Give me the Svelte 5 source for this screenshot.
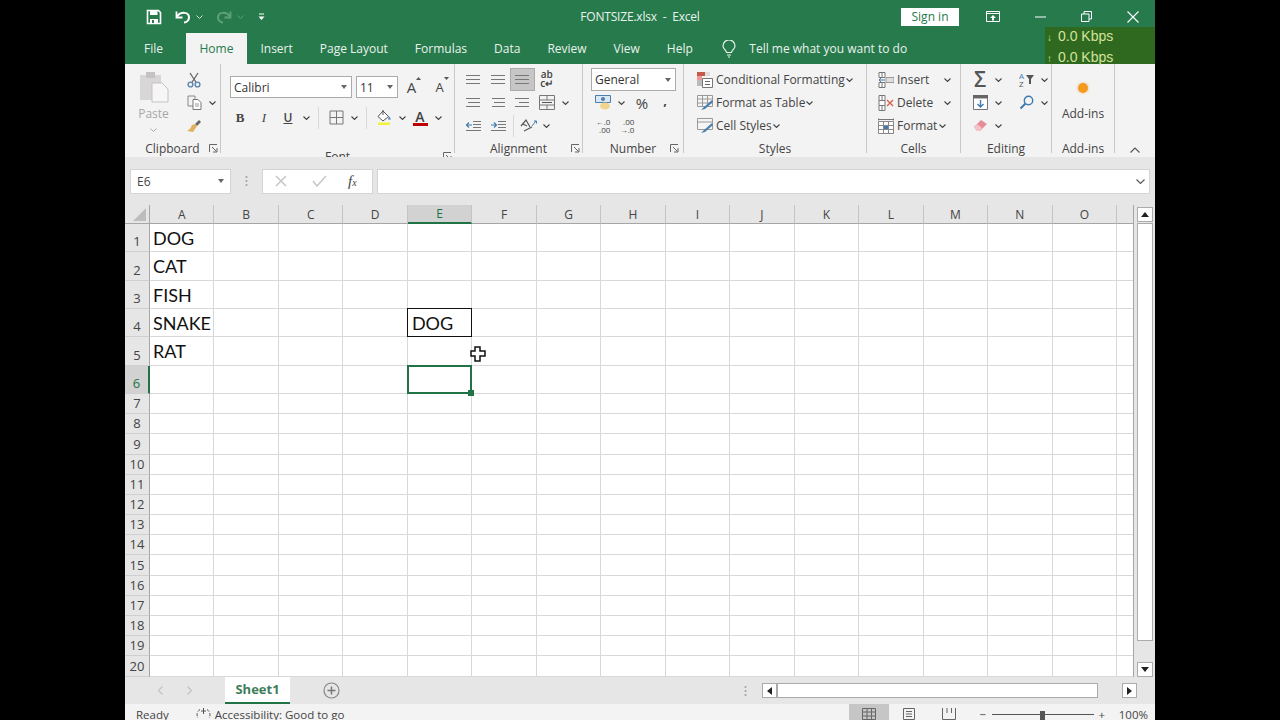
<script>
    const tabs = ["Insert", "Page Layout", "Formulas", "Data", "Review", "View", "Help"];
    const cols = ["A", "B", "C", "D", "E", "F", "G", "H", "I", "J", "K", "L", "M", "N", "O"];
    const rows = Array.from({ length: 20 }, (_, i) => i + 1);
    const cells = { A1: "DOG", A2: "CAT", A3: "FISH", A4: "SNAKE", A5: "RAT", E4: "DOG" };
</script>

{#snippet chev()}
    <span class="chev"><svg width="7" height="4" viewBox="0 0 7 4"><path d="M.5.5l3 3 3-3" fill="none" stroke="#444" stroke-width="1.1" /></svg></span>
{/snippet}

{#snippet launcher()}
    <svg class="launch" width="9" height="9" viewBox="0 0 9 9"><path d="M.5 8V.5H8M3 3l4.5 4.5M4 8h4V4" fill="none" stroke="#666" /></svg>
{/snippet}

{#snippet lines(a, b, c)}
    <svg width="16" height="12" viewBox="0 0 16 12"><path d="M{a} 1.5H15M{b} 5.5H15M{c} 9.5H15" stroke="#777" fill="none" /></svg>
{/snippet}

<div class="excel">
    <header class="titlebar">
        <div class="qat">
            <svg class="q-save" width="16" height="16" viewBox="0 0 16 16"><path d="M1.5 1.5h11l2 2v11h-13z" fill="none" stroke="#fff" stroke-width="1.6" /><path d="M4 2h7.500v4H4zM4 10h8v4.500H4z" fill="#fff" /><path d="M6 11h2v3H6z" fill="#2a7a4d" /></svg>
            <svg class="q-undo" width="16" height="14" viewBox="0 0 16 14"><path d="M2 6.500C6 1 14 2 14 7.500c0 3-2.500 5-5 5" fill="none" stroke="#fff" stroke-width="2" /><path d="M1.500 1.500v6h6" fill="none" stroke="#fff" stroke-width="1.800" /></svg>
            <svg class="q-ch" width="7" height="4" viewBox="0 0 7 4"><path d="M.5.5l3 3 3-3" fill="none" stroke="#cfe3d7" /></svg>
            <svg class="q-redo" width="16" height="14" viewBox="0 0 16 14"><path d="M14 6.500C10 1 2 2 2 7.500c0 3 2.500 5 5 5" fill="none" stroke="#5fa07c" stroke-width="2" /><path d="M14.500 1.500v6h-6" fill="none" stroke="#5fa07c" stroke-width="1.800" /></svg>
            <svg class="q-ch2" width="7" height="4" viewBox="0 0 7 4"><path d="M.5.5l3 3 3-3" fill="none" stroke="#5fa07c" /></svg>
            <svg class="q-more" width="7" height="8" viewBox="0 0 7 8"><path d="M1 1h5" stroke="#fff" /><path d="M.5 3.500h6L3.500 7z" fill="#fff" /></svg>
        </div>
        <div class="doc-title">FONTSIZE.xlsx &nbsp;-&nbsp; Excel</div>
        <div class="win">
            <button class="signin">Sign in</button>
            <svg class="w-display" width="14" height="11" viewBox="0 0 14 11"><path d="M.5.500h13v10H.5zM.5 2.500h13" fill="none" stroke="#fff" /><path d="M7 4l3 3H8v2.500H6V7H4z" fill="#fff" /></svg>
            <svg class="w-min" width="11" height="2" viewBox="0 0 11 2"><path d="M0 1h11" stroke="#fff" /></svg>
            <svg class="w-max" width="11" height="11" viewBox="0 0 11 11"><path d="M.5 3h7.500v7.500H.5zM3 3V.5h7.500V8H8" fill="none" stroke="#fff" /></svg>
            <svg class="w-close" width="12" height="12" viewBox="0 0 12 12"><path d="M.5.500l11 11M11.500.500l-11 11" stroke="#fff" stroke-width="1.100" /></svg>
        </div>
    </header>

    <nav class="tabs">
        <span class="tab file">File</span>
        <span class="tab active">Home</span>
        {#each tabs as tab}
            <span class="tab">{tab}</span>
        {/each}
        <svg class="bulb" width="14" height="18" viewBox="0 0 14 18"><path d="M4.500 12.500C4 9.500 1 9 1 6a6 6 0 0 1 12 0c0 3-3 3.500-3.500 6.500zM5 15h4M6 17h2" fill="none" stroke="#e8f3ec" stroke-width="1.200" /></svg>
        <span class="tell">Tell me what you want to do</span>
    </nav>

    <div class="speed">
        <div><b>↓</b>0.0 Kbps</div>
        <div><b>↑</b>0.0 Kbps</div>
    </div>

    <section class="ribbon">
        <div class="group g-clip">
            <div class="body clip">
                <div class="paste">
                    <svg width="30" height="32" viewBox="0 0 30 32"><path d="M1 4h21v25H1z" fill="#d8d6d6" /><path d="M7 1h9v6H7z" fill="#c4c2c2" /><path d="M13 12h10l6 6v13H13z" fill="#f6f6f6" stroke="#c4c4c4" /></svg>
                    <span>Paste</span>
                    <svg class="paste-ch" width="7" height="4" viewBox="0 0 7 4"><path d="M.5.5l3 3 3-3" fill="none" stroke="#aaa" /></svg>
                </div>
                <div class="stack clip-small">
                    <div class="row"><span class="ib"><svg width="14" height="16" viewBox="0 0 14 16"><path d="M3 1l6.500 10M11 1L4.500 11" stroke="#666" stroke-width="1.300" fill="none" /><circle cx="3.500" cy="12.500" r="2.400" fill="none" stroke="#5b87ad" stroke-width="1.400" /><circle cx="10.500" cy="12.500" r="2.400" fill="none" stroke="#5b87ad" stroke-width="1.400" /></svg></span></div>
                    <div class="row"><span class="ib"><svg width="15" height="15" viewBox="0 0 15 15"><path d="M1 1h7v10H1z" fill="#f3f3f3" stroke="#888" /><path d="M6 4.500h5l3 3v7H6z" fill="#fff" stroke="#777" /><path d="M8 9h4M8 11h4" stroke="#999" /></svg></span>{@render chev()}</div>
                    <div class="row"><span class="ib"><svg width="16" height="15" viewBox="0 0 16 15"><path d="M9 6l4-4 2 2-4 4z" fill="#666" /><path d="M9 6l2 2-4 6-6-1c2-1 4-3 5-6z" fill="#e0b25f" /></svg></span></div>
                </div>
            </div>
            <div class="label"><span></span><span>Clipboard</span>{@render launcher()}</div>
        </div>

        <div class="group g-font">
            <div class="body font-body">
                <div class="row combos">
                    <div class="combo name"><span>Calibri</span><i></i></div>
                    <div class="combo size"><span>11</span><i></i></div>
                    <span class="ib grow-a"><span class="big-a">A</span><svg width="5" height="3" viewBox="0 0 5 3"><path d="M0 3l2.500-3L5 3z" fill="#555" /></svg></span>
                    <span class="ib grow-a"><span class="small-a">A</span><svg width="5" height="3" viewBox="0 0 5 3"><path d="M0 0l2.500 3L5 0z" fill="#555" /></svg></span>
                </div>
                <div class="row fmt">
                    <span class="ib bold">B</span>
                    <span class="ib ital">I</span>
                    <span class="ib under">U</span>
                    {@render chev()}
                    <span class="vsep"></span>
                    <span class="ib"><svg width="15" height="15" viewBox="0 0 15 15"><path d="M1 1h13v13H1zM7.500 1v13M1 7.500h13" fill="none" stroke="#777" /></svg></span>
                    {@render chev()}
                    <span class="vsep"></span>
                    <span class="ib"><svg width="17" height="17" viewBox="0 0 17 17"><path d="M7 2l5.500 5.500L7 12 2 7.500z" fill="#fff" stroke="#555" /><path d="M7 1v5" stroke="#555" /><path d="M13 7l2 3.500h-3z" fill="#4a7fb0" /><path d="M2 13.500h12V16H2z" fill="#f2f23c" /></svg></span>
                    {@render chev()}
                    <span class="ib colour"><span>A</span><i></i></span>
                    {@render chev()}
                </div>
            </div>
            <div class="label"><span></span><span>Font</span>{@render launcher()}</div>
        </div>

        <div class="group g-align">
            <div class="stack align-body">
                <div class="row">
                    <span class="ia">{@render lines(1, 1, 1)}</span>
                    <span class="ia">{@render lines(1, 1, 1)}</span>
                    <span class="ia on">{@render lines(1, 1, 1)}</span>
                    <span class="ia wrap">ab<br />c↵</span>
                </div>
                <div class="row">
                    <span class="ia">{@render lines(1, 3, 1)}</span>
                    <span class="ia">{@render lines(2, 4, 2)}</span>
                    <span class="ia">{@render lines(1, 5, 1)}</span>
                    <span class="ia"><svg width="16" height="15" viewBox="0 0 16 15"><path d="M.5.500h15v14H.5zM.5 5h15M.5 10h15M8 .5V5M8 10v4.500" fill="none" stroke="#777" /><path d="M3 7.500h10" stroke="#555" /></svg></span>
                    {@render chev()}
                </div>
                <div class="row">
                    <span class="ia"><svg width="16" height="12" viewBox="0 0 16 12"><path d="M8 1.500h8M8 4.500h8M8 7.500h8M1 10.500h15" stroke="#777" /><path d="M7 5H2M4 2.500L1.500 5 4 7.500" fill="none" stroke="#3f7ab0" stroke-width="1.200" /></svg></span>
                    <span class="ia"><svg width="16" height="12" viewBox="0 0 16 12"><path d="M8 1.500h8M8 4.500h8M8 7.500h8M1 10.500h15" stroke="#777" /><path d="M1 5h5M4 2.500L6.500 5 4 7.500" fill="none" stroke="#3f7ab0" stroke-width="1.200" /></svg></span>
                    <span class="vsep short"></span>
                    <span class="ib"><svg width="17" height="15" viewBox="0 0 17 15"><path d="M1 8l5-6 4 7M3 6l4 2M4 13l8-4" fill="none" stroke="#555" stroke-width="1.200" /><path d="M12 8l4-5M14 3h2.500v2.500" fill="none" stroke="#3f7ab0" /></svg></span>
                    {@render chev()}
                </div>
            </div>
            <div class="label"><span></span><span>Alignment</span>{@render launcher()}</div>
        </div>

        <div class="group g-num">
            <div class="stack num-body">
                <div class="row"><div class="combo general"><span>General</span><i></i></div></div>
                <div class="row">
                    <span class="ib"><svg width="16" height="15" viewBox="0 0 16 15"><path d="M.5.500h15v7H.5z" fill="#dbe7f2" stroke="#4a7fb0" /><circle cx="8" cy="4" r="2" fill="#4a7fb0" /><ellipse cx="10" cy="11" rx="5" ry="3.500" fill="#f1d48d" /></svg></span>
                    {@render chev()}
                    <span class="ib pct">%</span>
                    <span class="ib comma">,</span>
                </div>
                <div class="row dec">
                    <span class="ib"><span class="deci"><b>←.0</b><b>.00</b></span></span>
                    <span class="ib"><span class="deci"><b>.00</b><b>→.0</b></span></span>
                </div>
            </div>
            <div class="label single">Number{@render launcher()}</div>
        </div>

        <div class="group g-styles">
            <div class="stack styles-body">
                <div class="row"><span class="si"><svg width="16" height="16" viewBox="0 0 16 16"><path d="M0 0h8v4H0z" fill="#c55a4a" /><path d="M0 4h5v4H0z" fill="#e99" /><path d="M8 0h5v4H8z" fill="#ddd" /><path d="M0 8h5v6H0z" fill="#bbb" /><path d="M5.500 6.500h10v9h-10z" fill="#fff" stroke="#777" /><path d="M8 9.500h5M8 12.500h5" stroke="#666" /></svg></span>Conditional Formatting{@render chev()}</div>
                <div class="row"><span class="si"><svg width="16" height="16" viewBox="0 0 16 16"><path d="M.5.500h15v11H.5zM.5 4h15M.5 8h15M5.500.5v11M10.500.5v11" fill="#f5f5f5" stroke="#999" /><path d="M15 5l-8 7-3 3 4-1 8-7z" fill="#4a7fb0" /></svg></span>Format as Table{@render chev()}</div>
                <div class="row"><span class="si"><svg width="16" height="16" viewBox="0 0 16 16"><path d="M.5.500h15v11H.5zM.5 4h15" fill="#f5f5f5" stroke="#999" /><path d="M15 5l-8 7-3 3 4-1 8-7z" fill="#4a7fb0" /></svg></span>Cell Styles{@render chev()}</div>
            </div>
            <div class="label single">Styles</div>
        </div>

        <div class="group g-cells">
            <div class="stack cells-body">
                <div class="row"><span class="si"><svg width="16" height="16" viewBox="0 0 16 16"><path d="M1 .5h6v5H1zM4 .5v5M1 10.500h6v5H1zM4 10.500v5" fill="#fff" stroke="#777" /><path d="M8 5.500h8v5H8z" fill="#ddd" stroke="#999" /><path d="M7 8H1M3 6L1 8l2 2" fill="none" stroke="#3f7ab0" /></svg></span><span class="ct">Insert</span>{@render chev()}</div>
                <div class="row"><span class="si"><svg width="16" height="16" viewBox="0 0 16 16"><path d="M1 .5h6v5H1zM4 .5v5M1 10.500h6v5H1zM4 10.500v5M1 5.500h6v5H1z" fill="#fff" stroke="#777" /><path d="M9 5l6 6M15 5l-6 6" stroke="#d9604c" stroke-width="1.400" /></svg></span><span class="ct">Delete</span>{@render chev()}</div>
                <div class="row"><span class="si"><svg width="16" height="16" viewBox="0 0 16 16"><path d="M.5 3.500h15v12H.5zM.5 7.500h15M.5 11.500h15M5.500 3.500v12M10.500 3.500v12" fill="#fff" stroke="#888" /><path d="M6 8h4v3H6z" fill="#3f7ab0" /><path d="M.5.500v2M15.500.5v2M.5 1.500h15" stroke="#777" fill="none" /></svg></span><span class="fm">Format</span>{@render chev()}</div>
            </div>
            <div class="label single">Cells</div>
        </div>

        <div class="group g-edit">
            <div class="stack edit-body">
                <div class="row">
                    <span class="ib"><span class="sigma">Σ</span></span>
                    {@render chev()}
                    <span class="gap"></span>
                    <span class="ib"><svg width="17" height="17" viewBox="0 0 17 17"><text x="1" y="7.500" class="az">A</text><text x="1" y="16" class="az z">Z</text><path d="M8 4h8l-3 4v5h-2V8z" fill="#555" /></svg></span>
                    {@render chev()}
                </div>
                <div class="row">
                    <span class="ib"><svg width="15" height="15" viewBox="0 0 15 15"><path d="M.5 3h14v11.500H.5z" fill="#fff" stroke="#777" /><path d="M0 0h15v3H0z" fill="#666" /><path d="M7.500 5v7M4.500 9l3 3 3-3" fill="none" stroke="#3f7ab0" stroke-width="1.400" /></svg></span>
                    {@render chev()}
                    <span class="gap"></span>
                    <span class="ib"><svg width="15" height="15" viewBox="0 0 15 15"><circle cx="9.500" cy="5.500" r="4.200" fill="none" stroke="#3f7ab0" stroke-width="1.400" /><path d="M6.500 8.500L1.500 13.500" stroke="#3f7ab0" stroke-width="2" /></svg></span>
                    {@render chev()}
                </div>
                <div class="row">
                    <span class="ib"><svg width="15" height="13" viewBox="0 0 15 13"><path d="M1 8l7-7 6 4-7 7H4z" fill="#e58e97" /><path d="M1 8l3-3 5 4-2 3H4z" fill="#f3c3c7" /></svg></span>
                    {@render chev()}
                </div>
            </div>
            <div class="label single">Editing</div>
        </div>

        <div class="group g-add">
            <div class="addin"><span class="dot"></span><span>Add-ins</span></div>
            <div class="label single">Add-ins</div>
        </div>

        <div class="collapse"><svg width="10" height="6" viewBox="0 0 10 6"><path d="M.5 5.500L5 1l4.500 4.500" fill="none" stroke="#555" stroke-width="1.100" /></svg></div>
    </section>

    <div class="formula">
        <div class="namebox"><span>E6</span><i></i></div>
        <span class="dots"></span>
        <div class="fxbox">
            <svg width="12" height="12" viewBox="0 0 12 12"><path d="M1 1l10 10M11 1L1 11" stroke="#c6c6c6" stroke-width="1.500" /></svg>
            <svg width="15" height="12" viewBox="0 0 15 12"><path d="M1 6l4 5L14 1" fill="none" stroke="#c6c6c6" stroke-width="1.500" /></svg>
            <span class="fx">f<small>x</small></span>
        </div>
        <div class="input"><svg width="9" height="5" viewBox="0 0 9 5"><path d="M.5.500l4 4 4-4" fill="none" stroke="#555" stroke-width="1.100" /></svg></div>
    </div>

    <div class="sheet-wrap">
        <div class="sheet">
            <div class="corner"><svg width="13" height="13" viewBox="0 0 13 13"><path d="M13 0v13H0z" fill="#bdbdbd" /></svg></div>
            {#each cols as c}
                <div class="col-h" class:sel={c === "E"}>{c}</div>
            {/each}
            <div class="col-h tail"></div>
            {#each rows as r}
                <div class="row-h" class:sel={r === 6}>{r}</div>
                {#each cols as c}
                    <div class="cell" class:boxed={c + r === "E4"} class:current={c + r === "E6"}>{cells[c + r] ?? ""}</div>
                {/each}
                <div class="cell tail"></div>
            {/each}
            <svg class="cursor" width="16" height="16" viewBox="0 0 16 16"><path d="M5 1h5v4h5v5h-5v5H5v-5H1V5h4z" fill="#fff" stroke="#111" stroke-width="1.500" /></svg>
        </div>
        <div class="vscroll">
            <button class="sbtn"><svg width="8" height="5" viewBox="0 0 8 5"><path d="M0 5l4-5 4 5z" fill="#222" /></svg></button>
            <div class="vthumb"></div>
            <button class="sbtn"><svg width="8" height="5" viewBox="0 0 8 5"><path d="M0 0l4 5 4-5z" fill="#222" /></svg></button>
        </div>
    </div>

    <div class="sheetbar">
        <span class="nav"><svg width="5" height="9" viewBox="0 0 5 9"><path d="M4.500.5l-4 4 4 4" fill="none" stroke="#c4c4c4" stroke-width="1.300" /></svg><svg width="5" height="9" viewBox="0 0 5 9"><path d="M.5.500l4 4-4 4" fill="none" stroke="#c4c4c4" stroke-width="1.300" /></svg></span>
        <span class="sheet-tab">Sheet1</span>
        <svg class="add" width="17" height="17" viewBox="0 0 17 17"><circle cx="8.500" cy="8.500" r="7.500" fill="none" stroke="#888" stroke-width="1.200" /><path d="M8.500 4.500v8M4.500 8.500h8" stroke="#777" stroke-width="1.500" /></svg>
        <span class="bar-dots"></span>
        <div class="hscroll">
            <button class="hbtn"><svg width="5" height="8" viewBox="0 0 5 8"><path d="M5 0L0 4l5 4z" fill="#222" /></svg></button>
            <div class="hthumb"></div>
            <div class="hrest"></div>
            <button class="hbtn"><svg width="5" height="8" viewBox="0 0 5 8"><path d="M0 0l5 4-5 4z" fill="#222" /></svg></button>
        </div>
    </div>

    <footer class="status">
        <span class="ready">Ready</span>
        <svg class="acc" width="15" height="15" viewBox="0 0 15 15"><path d="M4 2.500A6 6 0 0 0 2 11M11 2.500A6 6 0 0 1 13 11M4.500 13.500h6" fill="none" stroke="#555" stroke-dasharray="3 1.500" /><path d="M7.500 1v6M5 4h5" stroke="#555" /></svg>
        <span class="acc-t">Accessibility: Good to go</span>
        <div class="views">
            <span class="view on"><svg width="14" height="12" viewBox="0 0 14 12"><path d="M.5.500h13v11H.5zM.5 4h13M.5 8h13M5 .5v11M9.500.5v11" fill="none" stroke="#666" /></svg></span>
            <span class="view"><svg width="12" height="12" viewBox="0 0 12 12"><path d="M.5.500h11v11H.5zM3 3.500h6M3 6h6M3 8.500h6" fill="none" stroke="#666" /></svg></span>
            <span class="view"><svg width="14" height="12" viewBox="0 0 14 12"><path d="M.5 0v11.500h13V0M5 0v5M9.500 0v5" fill="none" stroke="#666" /></svg></span>
        </div>
        <span class="zm">−</span>
        <div class="slider"><i></i></div>
        <span class="zm plus">+</span>
        <span class="pct100">100%</span>
    </footer>
</div>

<style>
    :global(body) {
        background: #000;
    }

    .excel {
        position: relative;
        width: 1030px;
        height: 720px;
        margin: 0 auto;
        overflow: hidden;
        display: flex;
        flex-direction: column;
        background: #e6e6e6;
        font-family: "Open Sans", "Noto Sans", sans-serif;
        font-size: 12px;
        color: #444;
    }

    svg {
        display: block;
        flex: none;
    }

    button {
        padding: 0;
        font: inherit;
    }

    /* title bar + tabs */
    .titlebar {
        height: 33px;
        flex: none;
        display: grid;
        grid-template-columns: 1fr auto 1fr;
        align-items: center;
        background: #277a4c;
        color: #e9f3ed;
    }

    .qat {
        display: flex;
        align-items: center;
        padding-left: 21px;
    }

    .q-undo { margin-left: 13px; }
    .q-ch { margin-left: 5px; }
    .q-redo { margin-left: 13px; }
    .q-ch2 { margin-left: 5px; }
    .q-more { margin-left: 14px; }

    .doc-title {
        font-size: 12px;
        letter-spacing: -0.2px;
    }

    .win {
        display: flex;
        align-items: center;
        justify-content: flex-end;
    }

    .signin {
        width: 58px;
        height: 18px;
        border: 0;
        background: #fff;
        color: #277a4c;
        font-size: 12px;
        line-height: 18px;
    }

    .w-display { margin-left: 27px; }
    .w-min { margin-left: 35px; }
    .w-max { margin-left: 35px; }
    .w-close { margin-left: 35px; margin-right: 16px; }

    .tabs {
        height: 31px;
        flex: none;
        display: flex;
        align-items: stretch;
        padding-left: 5px;
        background: #277a4c;
        color: #e9f3ed;
        font-size: 12px;
    }

    .tab {
        display: flex;
        align-items: center;
        padding: 0 13.5px;
    }

    .tab.file {
        padding: 0 14px;
        margin-right: 9px;
    }

    .tab.active {
        background: #f3f3f3;
        color: #277a4c;
    }

    .bulb {
        align-self: center;
        margin-left: 16px;
    }

    .tell {
        display: flex;
        align-items: center;
        margin-left: 13px;
    }

    .speed {
        position: absolute;
        top: 27px;
        right: 0;
        width: 110px;
        height: 37px;
        padding-left: 2px;
        box-sizing: border-box;
        background: #2f691f;
        color: #d6e29a;
        font-family: "Liberation Sans", sans-serif;
        font-size: 14px;
        line-height: 18.5px;
    }

    .speed b {
        display: inline-block;
        width: 9px;
        color: #b9e98a;
        font-size: 10px;
        margin-right: 2px;
    }

    /* ribbon */
    .ribbon {
        height: 93px;
        flex: none;
        display: flex;
        background: #f3f3f3;
    }

    .group {
        display: flex;
        flex-direction: column;
        box-sizing: border-box;
        border-right: 1px solid #c9c9c9;
        margin-bottom: 4px;
    }

    .g-clip { width: 96px; }
    .g-font { width: 234px; }
    .g-align { width: 128px; }
    .g-num { width: 101px; }
    .g-styles { width: 183px; }
    .g-cells { width: 94px; }
    .g-edit { width: 91px; }
    .g-add { width: 63px; }

    .body, .stack, .addin {
        height: 72px;
        margin-top: 4px;
        flex: none;
    }

    .stack {
        display: flex;
        flex-direction: column;
    }

    .row {
        display: flex;
        align-items: center;
        height: 23px;
        flex: none;
        white-space: nowrap;
    }

    .label {
        display: grid;
        grid-template-columns: 1fr auto 1fr;
        align-items: center;
        height: 17px;
        color: #444;
    }

    .label.single {
        position: relative;
        display: block;
        text-align: center;
        line-height: 17px;
    }

    .label.single .launch {
        position: absolute;
        right: 2px;
        top: 4px;
    }

    .launch {
        justify-self: end;
        margin-right: 2px;
    }

    .ib {
        width: 24px;
        height: 23px;
        flex: none;
        display: flex;
        align-items: center;
        justify-content: center;
    }

    .ia {
        width: 24.5px;
        height: 23px;
        flex: none;
        display: flex;
        align-items: center;
        justify-content: center;
        box-sizing: border-box;
    }

    .ia.on {
        background: #c6c6c6;
        border: 1px solid #aaa;
    }

    .chev {
        width: 12px;
        flex: none;
        display: flex;
        justify-content: center;
    }

    .vsep {
        width: 12px;
        height: 22px;
        flex: none;
        background: linear-gradient(#d8d8d8, #d8d8d8) center / 1px 100% no-repeat;
    }

    .vsep.short {
        width: 6px;
    }

    /* clipboard */
    .clip {
        display: flex;
    }

    .paste {
        width: 57px;
        display: flex;
        flex-direction: column;
        align-items: center;
        padding-top: 3px;
        color: #a8a8a8;
    }

    .paste span {
        margin-top: 2px;
        margin-left: 0;
    }

    .paste-ch {
        margin-top: 6px;
    }

    .clip-small {
        height: auto;
        margin-top: 0;
    }

    /* font */
    .font-body {
        padding-top: 8px;
        padding-left: 7px;
    }

    .combos {
        height: 22px;
        gap: 4px;
        margin-left: 2px;
    }

    .combo {
        height: 22px;
        box-sizing: border-box;
        display: flex;
        align-items: center;
        justify-content: space-between;
        padding: 0 4px 0 3px;
        background: #fff;
        border: 1px solid #ababab;
        color: #333;
    }

    .combo i, .namebox i {
        width: 0;
        height: 0;
        border: 3.5px solid transparent;
        border-top: 4px solid #666;
        border-bottom: 0;
    }

    .name { width: 122px; }
    .size { width: 42px; }

    .grow-a {
        width: 24px;
        gap: 0;
        align-items: flex-start;
        padding-top: 1px;
        height: 22px;
        box-sizing: border-box;
    }

    .big-a {
        font-size: 15px;
        line-height: 21px;
    }

    .small-a {
        font-size: 13px;
        line-height: 21px;
    }

    .fmt {
        margin-top: 8px;
    }

    .bold { font-weight: 700; font-family: "Liberation Serif", serif; font-size: 13px; }
    .ital { font-style: italic; font-family: "Liberation Serif", serif; font-size: 13px; }
    .under { text-decoration: underline; font-weight: 600; }

    .colour {
        flex-direction: column;
        line-height: 13px;
        font-weight: 600;
        font-size: 14px;
    }

    .colour i {
        width: 15px;
        height: 3px;
        background: #c00000;
    }

    /* alignment */
    .align-body {
        padding-left: 6px;
    }

    .wrap {
        display: block;
        padding-top: 2px;
        text-align: center;
        font-size: 10px;
        font-weight: 600;
        line-height: 9px;
    }

    /* number */
    .num-body {
        padding-left: 8px;
    }

    .general {
        width: 85px;
        height: 23px;
    }

    .pct {
        font-size: 15px;
        margin-left: 3px;
    }

    .comma {
        font-weight: 700;
        font-size: 13px;
        padding-bottom: 6px;
        box-sizing: border-box;
        margin-left: -1px;
    }

    .dec {
        margin-left: 0;
    }

    .deci {
        display: flex;
        flex-direction: column;
        align-items: flex-end;
        font-size: 8px;
        line-height: 8px;
    }

    .deci b {
        font-weight: 400;
    }

    /* styles / cells */
    .styles-body {
        padding-left: 13px;
    }

    .si {
        width: 19px;
        flex: none;
    }

    .styles-body .chev {
        width: 9px;
    }

    .cells-body {
        padding-left: 11px;
    }

    .ct {
        width: 44px;
    }

    .fm {
        width: 39px;
    }

    /* editing */
    .edit-body {
        padding-left: 7px;
    }

    .sigma {
        font-size: 21px;
        line-height: 23px;
        font-weight: 600;
        color: #555;
    }

    .gap {
        width: 10px;
        flex: none;
    }

    .az {
        font-size: 8px;
        font-family: "Open Sans", sans-serif;
        fill: #3f7ab0;
    }

    .az.z {
        fill: #555;
    }

    /* add-ins */
    .addin {
        display: flex;
        flex-direction: column;
        align-items: center;
        padding-top: 15px;
        box-sizing: border-box;
    }

    .dot {
        width: 10px;
        height: 10px;
        margin-bottom: 12px;
        border-radius: 50%;
        background: #f39a1f;
        box-shadow: 0 0 3px #f7c27a;
    }

    .collapse {
        flex: 1;
        display: flex;
        align-items: flex-end;
        justify-content: center;
        padding-bottom: 4px;
    }

    /* formula bar */
    .formula {
        height: 48px;
        flex: none;
        box-sizing: border-box;
        display: flex;
        align-items: center;
        padding: 0 5px 0 5px;
        background: #e6e6e6;
    }

    .namebox {
        width: 101px;
        height: 25px;
        box-sizing: border-box;
        display: flex;
        align-items: center;
        justify-content: space-between;
        padding: 0 6px;
        background: #fff;
        border: 1px solid #d4d4d4;
    }

    .dots {
        width: 31px;
        height: 10px;
        flex: none;
        background: radial-gradient(circle, #aaa 1px, transparent 1.2px) center / 3px 4px repeat-y;
    }

    .fxbox {
        width: 111px;
        height: 25px;
        box-sizing: border-box;
        display: flex;
        align-items: center;
        gap: 25px;
        padding-left: 12px;
        background: #fff;
        border: 1px solid #d4d4d4;
    }

    .fx {
        font-family: "Liberation Serif", serif;
        font-style: italic;
        font-size: 15px;
        margin-left: -4px;
    }

    .fx small {
        font-size: 10px;
    }

    .input {
        flex: 1;
        height: 25px;
        margin-left: 4px;
        box-sizing: border-box;
        display: flex;
        align-items: center;
        justify-content: flex-end;
        padding-right: 4px;
        background: #fff;
        border: 1px solid #d4d4d4;
    }

    /* sheet */
    .sheet-wrap {
        height: 472px;
        flex: none;
        display: flex;
    }

    .sheet {
        position: relative;
        width: 1009px;
        flex: none;
        display: grid;
        grid-template-columns: 25px repeat(15, 64.47px) 1fr;
        grid-template-rows: 19px repeat(6, 28.33px) repeat(14, 20.2px);
        background: #fff;
        border-right: 1px solid #a6a6a6;
        border-bottom: 1px solid #a6a6a6;
        box-sizing: border-box;
    }

    .corner {
        display: flex;
        align-items: flex-end;
        justify-content: flex-end;
        padding: 0 3px 2px 0;
        background: #e6e6e6;
        border-right: 1px solid #a6a6a6;
        border-bottom: 1px solid #a6a6a6;
    }

    .col-h {
        display: flex;
        align-items: center;
        justify-content: center;
        background: #e6e6e6;
        border-right: 1px solid #c4c4c4;
        border-bottom: 1px solid #a6a6a6;
        color: #444;
        box-sizing: border-box;
    }

    .col-h.sel {
        background: #d2d2d2;
        color: #217346;
        border-bottom: 2px solid #217346;
    }

    .col-h.tail {
        border-right: 0;
    }

    .row-h {
        display: flex;
        align-items: flex-end;
        justify-content: center;
        padding-bottom: 2px;
        box-sizing: border-box;
        background: #e6e6e6;
        border-right: 1px solid #a6a6a6;
        border-bottom: 1px solid #d0d0d0;
        font-size: 13px;
        line-height: 15px;
        color: #444;
    }

    .row-h.sel {
        background: #d2d2d2;
        color: #217346;
        border-right: 2px solid #217346;
    }

    .cell {
        position: relative;
        box-sizing: border-box;
        padding-left: 3px;
        border-right: 1px solid #d8d8d8;
        border-bottom: 1px solid #d8d8d8;
        font-family: Lato, "Liberation Sans", sans-serif;
        font-size: 18px;
        line-height: 28px;
        color: #111;
        white-space: nowrap;
    }

    .cell.tail {
        border-right: 0;
    }

    .cell.boxed {
        border: 1px solid #111;
        border-left-width: 1px;
        margin: -1px 0 0 -1px;
        padding-left: 4px;
        line-height: 28px;
    }

    .cell.current::after {
        content: "";
        position: absolute;
        inset: -1px -1px -1px -1px;
        border: 2px solid #217346;
    }

    .cell.current::before {
        content: "";
        position: absolute;
        right: -3px;
        bottom: -3px;
        width: 6px;
        height: 6px;
        background: #217346;
        z-index: 1;
    }

    .cursor {
        position: absolute;
        left: 345px;
        top: 141px;
    }

    .vscroll {
        flex: 1;
        display: flex;
        flex-direction: column;
        align-items: center;
        padding: 2px 0 0 0;
        gap: 1px;
    }

    .sbtn {
        width: 16px;
        height: 15px;
        flex: none;
        display: flex;
        align-items: center;
        justify-content: center;
        background: #fff;
        border: 1px solid #ababab;
    }

    .vthumb {
        width: 16px;
        height: 418px;
        flex: none;
        background: #fff;
        border: 1px solid #ababab;
        box-sizing: border-box;
        margin-bottom: 20px;
    }

    /* sheet tabs */
    .sheetbar {
        height: 27px;
        flex: none;
        display: flex;
        align-items: center;
        background: #e6e6e6;
    }

    .nav {
        width: 100px;
        flex: none;
        display: flex;
        justify-content: center;
        gap: 24px;
    }

    .sheet-tab {
        width: 65px;
        height: 27px;
        box-sizing: border-box;
        display: flex;
        align-items: center;
        justify-content: center;
        background: #fff;
        border-bottom: 2px solid #217346;
        margin-top: -1px;
        color: #3f7d5a;
        font-weight: 700;
        font-size: 13px;
    }

    .add {
        margin-left: 33px;
    }

    .bar-dots {
        width: 3px;
        height: 12px;
        margin-left: 404px;
        flex: none;
        background: radial-gradient(circle, #aaa 1px, transparent 1.2px) center / 3px 4px repeat-y;
    }

    .hscroll {
        margin-left: 15px;
        display: flex;
        height: 15px;
        align-items: stretch;
    }

    .hbtn {
        width: 15px;
        display: flex;
        align-items: center;
        justify-content: center;
        background: #fff;
        border: 1px solid #ababab;
    }

    .hthumb {
        width: 321px;
        background: #fff;
        border: 1px solid #ababab;
        box-sizing: border-box;
    }

    .hrest {
        width: 24px;
    }

    /* status bar */
    .status {
        height: 16px;
        flex: none;
        display: flex;
        align-items: flex-start;
        background: #f3f3f3;
        line-height: 21px;
        font-size: 11.500px;
        color: #444;
    }

    .ready {
        margin-left: 11px;
    }

    .acc {
        margin: 3px 0 0 27px;
    }

    .acc-t {
        margin-left: 4px;
    }

    .views {
        display: flex;
        margin-left: auto;
    }

    .view {
        width: 40px;
        height: 16px;
        display: flex;
        justify-content: center;
        padding-top: 4px;
        box-sizing: border-box;
    }

    .view.on {
        background: #c6c6c6;
    }

    .zm {
        margin-left: 9px;
        width: 10px;
        text-align: center;
    }

    .slider {
        position: relative;
        width: 102px;
        height: 1px;
        margin: 10px 0 0 4px;
        background: #555;
    }

    .slider i {
        position: absolute;
        left: 48px;
        top: -3px;
        width: 5px;
        height: 9px;
        background: #555;
    }

    .plus {
        margin-left: 3px;
    }

    .pct100 {
        margin: 0 7px 0 12px;
    }
</style>
